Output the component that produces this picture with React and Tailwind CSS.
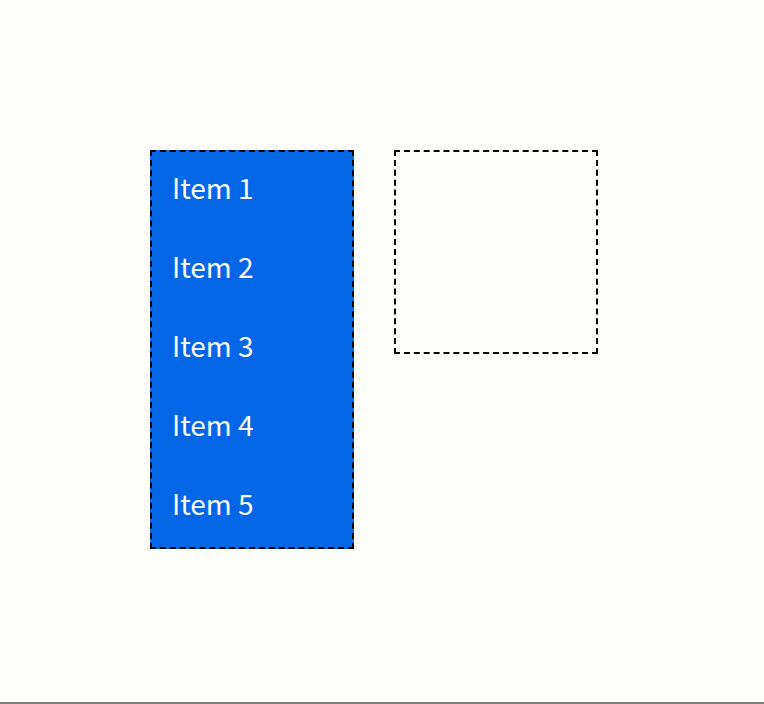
const items = ['Item 1', 'Item 2', 'Item 3', 'Item 4', 'Item 5'];

export default function App() {
  return (
    <div
      className="h-[704px] bg-[#fefefa] border-b-2 border-[#7d7d7d] box-border pt-[150px] pl-[150px]"
      style={{ fontFamily: '"Noto Sans CJK KR", "Noto Sans", sans-serif' }}
    >
      <div className="flex items-start gap-[40px]">
        {/* list */}
        <div className="w-[204px] border-2 border-dashed border-black bg-[#0366e6]">
          {items.map((item) => (
            <div key={item} className="h-[79px] flex items-center pl-5 pb-[9px] text-white text-[28px] leading-none">
              {item}
            </div>
          ))}
        </div>

        {/* drop target */}
        <div className="w-[204px] h-[204px] border-2 border-dashed border-black" />
      </div>
    </div>
  );
}
